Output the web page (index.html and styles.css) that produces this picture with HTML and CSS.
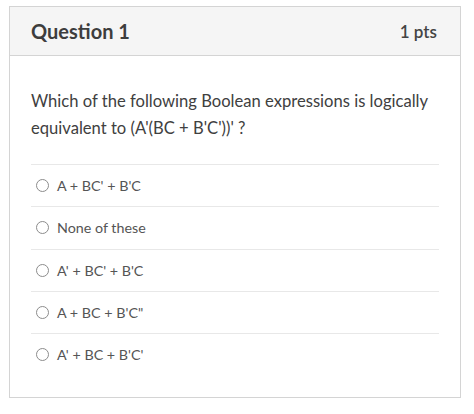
FILE: index.html
```html
<!DOCTYPE html>
<html>
<head>
<meta charset="utf-8">
<link rel="stylesheet" href="styles.css">
</head>
<body>
<div class="card">
  <div class="card-header">
    <span class="q-title">Question 1</span>
    <span class="q-pts">1 pts</span>
  </div>
  <div class="card-body">
    <p class="q-text">Which of the following Boolean expressions is logically equivalent to (A'(BC + B'C'))' ?</p>
    <ul class="answers">
      <li class="answer"><span class="radio"></span><span class="label">A + BC' + B'C</span></li>
      <li class="answer"><span class="radio"></span><span class="label">None of these</span></li>
      <li class="answer"><span class="radio"></span><span class="label">A' + BC' + B'C</span></li>
      <li class="answer"><span class="radio"></span><span class="label">A + BC + B'C"</span></li>
      <li class="answer"><span class="radio"></span><span class="label">A' + BC + B'C'</span></li>
    </ul>
  </div>
</div>
</body>
</html>
```
FILE: styles.css
```css
html, body {
  margin: 0;
  padding: 0;
  background: #ffffff;
}
body {
  font-family: Lato, "Open Sans", "Liberation Sans", sans-serif;
  padding: 6px 0 0 9px;
}
.card {
  width: 450px;
  border: 1px solid #d4d4d4;
  box-sizing: content-box;
}
.card-header {
  height: 48px;
  background: #f5f5f5;
  border-bottom: 1px solid #d4d4d4;
  display: flex;
  align-items: center;
  justify-content: space-between;
  padding: 0 23px 0 21px;
}
.q-title {
  font-size: 20px;
  font-weight: 700;
  color: #3d3d3d;
}
.q-pts {
  font-size: 17px;
  font-weight: 600;
  color: #444;
}
.card-body {
  padding: 32px 21px 22px 21px;
}
.q-text {
  margin: 0 0 22px 0;
  font-size: 16.6px;
  line-height: 27px;
  color: #404040;
}
.answers {
  list-style: none;
  margin: 0;
  padding: 0;
}
.answer {
  height: 41.25px;
  border-top: 1px solid #e8e8e8;
  display: flex;
  align-items: center;
  gap: 8px;
  padding-left: 5px;
}
.radio {
  width: 11px;
  height: 11px;
  border: 1.3px solid #8c8c8c;
  border-radius: 50%;
  flex: none;
}
.label {
  font-size: 14.3px;
  color: #555;
}
```
